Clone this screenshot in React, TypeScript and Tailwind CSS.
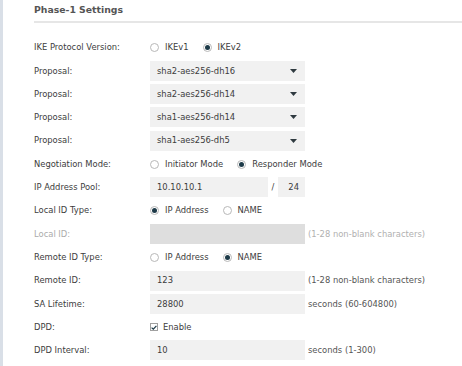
import React from "react";

type Opt = { label: string; on?: boolean };

function Radio({ label, on }: Opt) {
  return (
    <span className="flex items-center">
      <span className="flex h-[9px] w-[9px] items-center justify-center rounded-full border border-[#b8b8b8] bg-white">
        {on && <span className="h-[5px] w-[5px] rounded-full bg-[#1d3a48]" />}
      </span>
      <span className="ml-[6px]">{label}</span>
    </span>
  );
}

function Radios({ items }: { items: Opt[] }) {
  return (
    <div className="flex items-center gap-[14px]">
      {items.map((o) => (
        <Radio key={o.label} {...o} />
      ))}
    </div>
  );
}

function Box({ value, disabled }: { value?: string; disabled?: boolean }) {
  return (
    <div
      className={
        "flex h-[20px] w-[155px] items-center px-[7px] " +
        (disabled ? "bg-[#dedede]" : "bg-[#f1f1f1]")
      }
    >
      {value}
    </div>
  );
}

function Select({ value }: { value: string }) {
  return (
    <div className="flex h-[20px] w-[155px] items-center justify-between bg-[#f1f1f1] pl-[7px] pr-[8px]">
      <span>{value}</span>
      <svg width="7" height="4" viewBox="0 0 7 4">
        <path d="M0 0H7L3.5 4Z" fill="#2f3a40" />
      </svg>
    </div>
  );
}

function Row({
  label,
  dim,
  children,
}: {
  label: string;
  dim?: boolean;
  children: React.ReactNode;
}) {
  return (
    <div className="flex h-[23.3px] items-center">
      <div className={"w-[116px] shrink-0 " + (dim ? "text-[#ababab]" : "")}>{label}</div>
      <div className="flex items-center">{children}</div>
    </div>
  );
}

function Hint({ text, dim }: { text: string; dim?: boolean }) {
  return <span className={"ml-[3px] " + (dim ? "text-[#b0b0b0]" : "text-[#555]")}>{text}</span>;
}

export default function App() {
  return (
    <div
      className="flex h-[366px] w-[462px] overflow-hidden bg-white text-[8.4px] text-[#3c3c3c]"
      style={{ fontFamily: '"DejaVu Sans", Verdana, sans-serif' }}
    >
      <div className="w-[3px] shrink-0 bg-[#d9dfe7]" />
      <div className="flex-1 pl-[31px]">
        <div className="border-b-2 border-[#e6e6e6] pt-[3px] pb-[4px] text-[9.3px] font-bold text-[#555]">
          Phase-1 Settings
        </div>
        <div className="pt-[13px]">
          <Row label="IKE Protocol Version:">
            <Radios items={[{ label: "IKEv1" }, { label: "IKEv2", on: true }]} />
          </Row>
          <Row label="Proposal:">
            <Select value="sha2-aes256-dh16" />
          </Row>
          <Row label="Proposal:">
            <Select value="sha2-aes256-dh14" />
          </Row>
          <Row label="Proposal:">
            <Select value="sha1-aes256-dh14" />
          </Row>
          <Row label="Proposal:">
            <Select value="sha1-aes256-dh5" />
          </Row>
          <Row label="Negotiation Mode:">
            <Radios items={[{ label: "Initiator Mode" }, { label: "Responder Mode", on: true }]} />
          </Row>
          <Row label="IP Address Pool:">
            <div className="flex h-[20px] w-[118px] items-center bg-[#f1f1f1] px-[7px]">10.10.10.1</div>
            <span className="w-[10px] text-center">/</span>
            <div className="flex h-[20px] w-[27px] items-center justify-end bg-[#f1f1f1] px-[6px]">24</div>
          </Row>
          <Row label="Local ID Type:">
            <Radios items={[{ label: "IP Address", on: true }, { label: "NAME" }]} />
          </Row>
          <Row label="Local ID:" dim>
            <Box disabled />
            <Hint text="(1-28 non-blank characters)" dim />
          </Row>
          <Row label="Remote ID Type:">
            <Radios items={[{ label: "IP Address" }, { label: "NAME", on: true }]} />
          </Row>
          <Row label="Remote ID:">
            <Box value="123" />
            <Hint text="(1-28 non-blank characters)" />
          </Row>
          <Row label="SA Lifetime:">
            <Box value="28800" />
            <Hint text="seconds (60-604800)" />
          </Row>
          <Row label="DPD:">
            <span className="flex items-center">
              <span className="flex h-[8px] w-[8px] items-center justify-center border border-[#a0a0a0] bg-white">
                <svg width="6" height="5" viewBox="0 0 6 5">
                  <path d="M0.6 2.6L2.3 4.2L5.4 0.8" stroke="#1d3a48" strokeWidth="1.2" fill="none" />
                </svg>
              </span>
              <span className="ml-[5px]">Enable</span>
            </span>
          </Row>
          <Row label="DPD Interval:">
            <Box value="10" />
            <Hint text="seconds (1-300)" />
          </Row>
        </div>
      </div>
    </div>
  );
}
